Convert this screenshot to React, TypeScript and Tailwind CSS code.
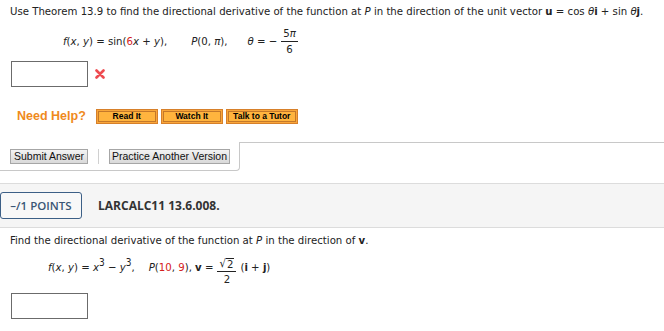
import React from "react";

const verdana = "font-['DejaVu_Sans_Condensed','DejaVu_Sans',Verdana,sans-serif]";
const helv = "font-['Liberation_Sans',Arial,sans-serif]";

function Frac({ top, bottom, lift }: { top: React.ReactNode; bottom: React.ReactNode; lift: string }) {
  return (
    <span className={`inline-flex flex-col items-center ${lift} mx-[4px] leading-[15px]`}>
      <span className="px-[2px]">{top}</span>
      <span className="self-stretch border-t border-[#222]" />
      <span>{bottom}</span>
    </span>
  );
}

function HelpButton({ label, w }: { label: string; w: string }) {
  return (
    <span className={`${w} inline-flex p-[1px] bg-[#f9a63a] border border-[#d7802a]`}>
      <span className={`${helv} flex-1 flex items-center justify-center h-[11px] bg-[#ffb43e] border border-[#c4782a] text-[8.5px] font-bold text-black leading-none whitespace-nowrap`}>
        {label}
      </span>
    </span>
  );
}

function GrayButton({ label, w }: { label: string; w: string }) {
  return (
    <span className={`${helv} ${w} inline-flex items-center justify-center h-[15px] bg-linear-to-b from-[#f3f3f3] to-[#d9d9d9] border border-[#a6a6a6] text-[10.5px] text-[#111] leading-none whitespace-nowrap`}>
      {label}
    </span>
  );
}

function WrongMark() {
  return (
    <svg width="10" height="10" viewBox="0 0 10 10" className="ml-[7px]">
      <path d="M1.5 1.5 L8.5 8.5 M8.5 1.5 L1.5 8.5" stroke="#ee4b50" strokeWidth="2.6" strokeLinecap="round" />
    </svg>
  );
}

export default function App() {
  return (
    <div className={`${verdana} w-[664px] h-[331px] bg-white text-[#222] text-[11.3px] overflow-hidden`}>
      {/* first question */}
      <div className="px-[10px] pt-[4px]">
        <p className="leading-[16px] whitespace-nowrap">
          Use Theorem 13.9 to find the directional derivative of the function at <i>P</i> in the direction of the unit vector{" "}
          <b>u</b> = cos <i>θ</i><b>i</b> + sin <i>θ</i><b>j</b>.
        </p>
        <div className="h-[32px] mt-[6px] pl-[53px] whitespace-nowrap leading-[32px]">
          <i>f</i>(<i>x</i>, <i>y</i>) = sin(<span className="text-[#d42020]">6</span><i>x</i> + <i>y</i>),
          <span className="ml-[24px]">
            <i>P</i>(0, <i>π</i>),
          </span>
          <span className="ml-[20px]">
            <i>θ</i> = −
          </span>
          <Frac top={<>5<i>π</i></>} bottom="6" lift="align-[8px]" />
        </div>
        <div className="flex items-center mt-[3px] pl-[1px]">
          <div className="w-[77px] h-[26px] border border-[#6b6b6b] bg-white" />
          <WrongMark />
        </div>
      </div>

      {/* need help */}
      <div className="flex items-center gap-[3px] pl-[17px] mt-[22px] h-[15px]">
        <span className={`${helv} text-[12.5px] font-bold text-[#ef8a1c] mr-[7px]`}>Need Help?</span>
        <HelpButton label="Read It" w="w-[62px]" />
        <HelpButton label="Watch It" w="w-[62px]" />
        <HelpButton label="Talk to a Tutor" w="w-[72px]" />
      </div>

      {/* submit tab */}
      <div className="flex mt-[18px] h-[29px]">
        <div className="w-[240px] flex items-center pl-[10px] pt-[1px] border-b border-r border-[#c8c8c8] rounded-br-[4px]">
          <GrayButton label="Submit Answer" w="w-[78px]" />
          <span className="mx-[10px] w-px h-[15px] bg-[#d0d0d0]" />
          <GrayButton label="Practice Another Version" w="w-[121px]" />
        </div>
        <div className="flex-1 border-t border-[#c8c8c8]" />
      </div>

      {/* second question header */}
      <div className="mt-[12px] h-[45px] bg-[#f5f5f5] border-y border-[#dcdcdc] flex items-center">
        <div className="w-[82px] h-[27px] flex items-center justify-center border border-[#3c5f86] rounded-[3px] bg-[#f8f8f8] font-['Open_Sans',sans-serif] text-[11.5px] font-semibold text-[#3a5675]">
          –/1 POINTS
        </div>
        <span className="ml-[16px] font-['Open_Sans',sans-serif] text-[12px] font-bold text-[#333]">LARCALC11 13.6.008.</span>
      </div>

      {/* second question */}
      <div className="px-[10px]">
        <p className="leading-[16px] mt-[5px] whitespace-nowrap">
          Find the directional derivative of the function at <i>P</i> in the direction of <b>v</b>.
        </p>
        <div className="h-[32px] mt-[3px] pl-[38px] whitespace-nowrap leading-[32px]">
          <i>f</i>(<i>x</i>, <i>y</i>) = <i>x</i>
          <sup className="text-[10px]">3</sup> − <i>y</i>
          <sup className="text-[10px]">3</sup>,
          <span className="ml-[14px]">
            <i>P</i>(<span className="text-[#d42020]">10</span>, <span className="text-[#d42020]">9</span>), <b>v</b> =
          </span>
          <Frac
            top={
              <span className="inline-flex items-end">
                <span>√</span>
                <span className="border-t border-[#222] leading-[12px] px-[1px]">2</span>
              </span>
            }
            bottom="2"
            lift="align-[4px]"
          />
          (<b>i</b> + <b>j</b>)
        </div>
        <div className="mt-[9px] pl-[1px]">
          <div className="w-[77px] h-[26px] border border-[#6b6b6b] bg-white" />
        </div>
      </div>
    </div>
  );
}
